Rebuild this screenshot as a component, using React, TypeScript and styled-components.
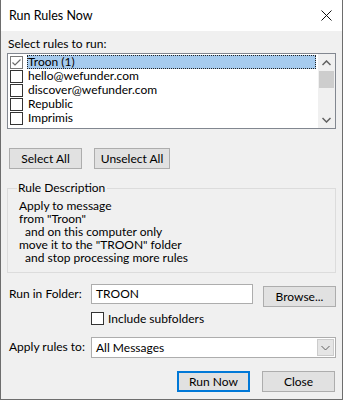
import React from "react";
import styled, { createGlobalStyle } from "styled-components";

const GlobalStyle = createGlobalStyle`
  html, body {
    margin: 0;
    padding: 0;
    background: #ffffff;
  }
  * {
    box-sizing: border-box;
  }
`;

const StyledWindow = styled.div`
  width: 343px;
  height: 400px;
  display: flex;
  flex-direction: column;
  border: 1px solid #6d6d6d;
  border-top: none;
  background-color: #f0f0f0;
  font-family: Lato, "Noto Sans", sans-serif;
  font-size: 12px;
  color: #000;
  overflow: hidden;
`;

const StyledTitleBar = styled.div`
  height: 31px;
  flex-shrink: 0;
  display: flex;
  flex-direction: row;
  align-items: center;
  justify-content: space-between;
  background-color: #ffffff;
  padding: 0 10px 0 8px;
`;

const StyledTitle = styled.div`
  font-size: 12.5px;
  line-height: 16px;
  padding-top: 1px;
`;

const StyledBody = styled.div`
  display: flex;
  flex-direction: column;
  padding: 6px 6px 0 6px;
`;

const StyledLabel = styled.div`
  line-height: 14px;
  height: 14px;
  padding-left: 1px;
  white-space: nowrap;
`;

const StyledListBox = styled.div`
  margin-top: 2px;
  height: 76px;
  border: 1px solid #828790;
  background-color: #ffffff;
  display: flex;
  flex-direction: row;
`;

const StyledRows = styled.div`
  flex: 1;
  display: flex;
  flex-direction: column;
  padding: 1px 2px 0 2px;
`;

const StyledRow = styled.div`
  height: 14px;
  display: flex;
  flex-direction: row;
  align-items: center;
  gap: 4px;
`;

const StyledCheck = styled.span<{ muted?: boolean }>`
  width: 13px;
  height: 13px;
  flex-shrink: 0;
  border: 1px solid ${({ muted }) => (muted ? "#7a7a7a" : "#333333")};
  background-color: #ffffff;
  display: flex;
  align-items: center;
  justify-content: center;
`;

const StyledRowText = styled.span<{ selected?: boolean }>`
  flex: 1;
  height: 14px;
  line-height: 14px;
  padding-left: 1px;
  background-color: ${({ selected }) => (selected ? "#a6cbee" : "transparent")};
  outline: ${({ selected }) => (selected ? "1px dotted #222" : "none")};
  outline-offset: -1px;
  white-space: nowrap;
`;

const StyledScrollBar = styled.div`
  width: 17px;
  background-color: #f0f0f0;
  display: flex;
  flex-direction: column;
  align-items: center;
`;

const StyledArrow = styled.div`
  height: 17px;
  width: 17px;
  display: flex;
  align-items: center;
  justify-content: center;
`;

const StyledThumb = styled.div`
  width: 15px;
  height: 17px;
  background-color: #cdcdcd;
`;

const StyledTrack = styled.div`
  flex: 1;
`;

const StyledButtonRow = styled.div<{ top: number; justify?: string }>`
  margin-top: ${({ top }) => top}px;
  display: flex;
  flex-direction: row;
  justify-content: ${({ justify }) => justify || "flex-start"};
  gap: 12px;
  padding: 0 1px 0 2px;
`;

const StyledButton = styled.button<{ width: number; primary?: boolean }>`
  width: ${({ width }) => width}px;
  height: 21px;
  padding: 0;
  font-family: inherit;
  font-size: 12px;
  color: #000;
  background-color: #e1e1e1;
  border: ${({ primary }) =>
    primary ? "2px solid #0078d7" : "1px solid #adadad"};
  line-height: 16px;
`;

const StyledGroup = styled.fieldset`
  margin: 12px 0 0 0;
  padding: 4px 0 8px 10px;
  border: 1px solid #dcdcdc;
  min-width: 0;
`;

const StyledLegend = styled.legend`
  padding: 0 2px 0 1px;
  margin-left: -1px;
  line-height: 14px;
`;

const StyledDescLine = styled.div<{ indent?: boolean }>`
  line-height: 13px;
  height: 13px;
  padding-left: ${({ indent }) => (indent ? 7 : 1)}px;
  white-space: nowrap;
`;

const StyledFormGrid = styled.div`
  margin-top: 11px;
  display: grid;
  grid-template-columns: 72px 162px 73px;
  column-gap: 10px;
  align-items: start;
  padding-left: 2px;
`;

const StyledFormLabel = styled.div<{ top?: number }>`
  line-height: 14px;
  margin-top: ${({ top }) => top || 0}px;
  padding-top: 3px;
  white-space: nowrap;
`;

const StyledInput = styled.div`
  height: 20px;
  border: 1px solid #adadad;
  background-color: #ffffff;
  padding: 0 4px;
  line-height: 18px;
`;

const StyledInlineCheck = styled.div`
  grid-column: 2 / 4;
  margin-top: 5px;
  display: flex;
  flex-direction: row;
  align-items: center;
  gap: 4px;
  height: 13px;
  line-height: 13px;
`;

const StyledCombo = styled.div`
  grid-column: 2 / 4;
  margin-top: 12px;
  height: 21px;
  border: 1px solid #adadad;
  background-color: #ffffff;
  display: flex;
  flex-direction: row;
  align-items: stretch;
`;

const StyledComboText = styled.div`
  flex: 1;
  padding: 0 4px;
  line-height: 19px;
`;

const StyledComboButton = styled.div`
  width: 17px;
  margin: 1px;
  background-color: #e5e5e5;
  border: 1px solid #cccccc;
  display: flex;
  align-items: center;
  justify-content: center;
`;

const rules = [
  { name: "Troon (1)", checked: true },
  { name: "hello@wefunder.com", checked: false },
  { name: "discover@wefunder.com", checked: false },
  { name: "Republic", checked: false },
  { name: "Imprimis", checked: false },
];

const CheckMark = () => (
  <svg width="11" height="11" viewBox="0 0 11 11">
    <path d="M1.5 5.5 L4 8 L9.5 2.5" fill="none" stroke="#6a6a6a" strokeWidth="1.2" />
  </svg>
);

const Chevron = ({ up, thin }: { up?: boolean; thin?: boolean }) => (
  <svg width="9" height="6" viewBox="0 0 9 6">
    <path
      d={up ? "M0.5 5 L4.5 1 L8.5 5" : "M0.5 1 L4.5 5 L8.5 1"}
      fill="none"
      stroke="#606060"
      strokeWidth={thin ? 1 : 1.5}
    />
  </svg>
);

export default function App() {
  return (
    <>
      <GlobalStyle />
      <StyledWindow>
        <StyledTitleBar>
          <StyledTitle>Run Rules Now</StyledTitle>
          <svg width="11" height="11" viewBox="0 0 11 11">
            <path d="M0.5 0.5 L10.5 10.5 M10.5 0.5 L0.5 10.5" stroke="#111" strokeWidth="1" />
          </svg>
        </StyledTitleBar>
        <StyledBody>
          <StyledLabel>Select rules to run:</StyledLabel>
          <StyledListBox>
            <StyledRows>
              {rules.map((rule, i) => (
                <StyledRow key={rule.name}>
                  <StyledCheck muted={rule.checked}>
                    {rule.checked && <CheckMark />}
                  </StyledCheck>
                  <StyledRowText selected={i === 0}>{rule.name}</StyledRowText>
                </StyledRow>
              ))}
            </StyledRows>
            <StyledScrollBar>
              <StyledArrow>
                <Chevron up />
              </StyledArrow>
              <StyledThumb />
              <StyledTrack />
              <StyledArrow>
                <Chevron />
              </StyledArrow>
            </StyledScrollBar>
          </StyledListBox>

          <StyledButtonRow top={19}>
            <StyledButton width={73}>Select All</StyledButton>
            <StyledButton width={76}>Unselect All</StyledButton>
          </StyledButtonRow>

          <StyledGroup>
            <StyledLegend>Rule Description</StyledLegend>
            <StyledDescLine>Apply to message</StyledDescLine>
            <StyledDescLine>from "Troon"</StyledDescLine>
            <StyledDescLine indent>and on this computer only</StyledDescLine>
            <StyledDescLine>move it to the "TROON" folder</StyledDescLine>
            <StyledDescLine indent>and stop processing more rules</StyledDescLine>
          </StyledGroup>

          <StyledFormGrid>
            <StyledFormLabel>Run in Folder:</StyledFormLabel>
            <StyledInput>TROON</StyledInput>
            <StyledButton width={73} style={{ marginTop: 2 }}>
              Browse...
            </StyledButton>
            <div />
            <StyledInlineCheck>
              <StyledCheck />
              Include subfolders
            </StyledInlineCheck>
            <StyledFormLabel top={12}>Apply rules to:</StyledFormLabel>
            <StyledCombo>
              <StyledComboText>All Messages</StyledComboText>
              <StyledComboButton>
                <Chevron thin />
              </StyledComboButton>
            </StyledCombo>
          </StyledFormGrid>

          <StyledButtonRow top={13} justify="flex-end">
            <StyledButton width={73} primary>
              Run Now
            </StyledButton>
            <StyledButton width={73}>Close</StyledButton>
          </StyledButtonRow>
        </StyledBody>
      </StyledWindow>
    </>
  );
}
